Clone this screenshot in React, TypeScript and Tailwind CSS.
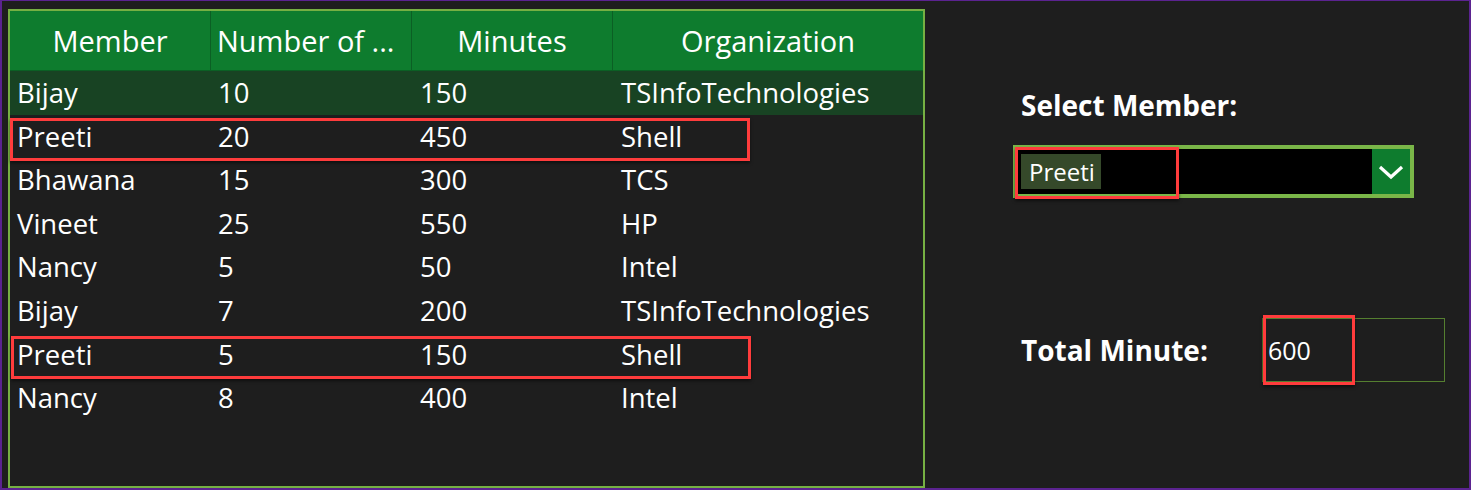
import React from "react";

const rows = [
  ["Bijay", "10", "150", "TSInfoTechnologies"],
  ["Preeti", "20", "450", "Shell"],
  ["Bhawana", "15", "300", "TCS"],
  ["Vineet", "25", "550", "HP"],
  ["Nancy", "5", "50", "Intel"],
  ["Bijay", "7", "200", "TSInfoTechnologies"],
  ["Preeti", "5", "150", "Shell"],
  ["Nancy", "8", "400", "Intel"],
];

const font = { fontFamily: '"Open Sans", "Noto Sans", sans-serif' };

export default function App() {
  return (
    <div
      className="relative w-[1471px] h-[490px] bg-[#1e1e1e] border-t border-x-2 border-b-2 border-[#5b2390] overflow-hidden text-white"
      style={font}
    >
      <div className="flex pl-[6px] pt-[8px]">
        {/* Table */}
        <div className="w-[917px] h-[479px] border-2 border-[#76b043] bg-[#1e1e1e] flex flex-col">
          <div className="h-[60px] bg-[#0e7c2e] grid grid-cols-[201px_201px_201px_1fr] border-b border-[#0b5f24] shrink-0 leading-none">
            <div className="flex items-center justify-center text-[29px] border-r border-[#0b5f24]">Member</div>
            <div className="flex items-center pl-[6px] text-[29px] border-r border-[#0b5f24] whitespace-nowrap overflow-hidden">Number of ...</div>
            <div className="flex items-center justify-center text-[29px] border-r border-[#0b5f24]">Minutes</div>
            <div className="flex items-center justify-center text-[29px]">Organization</div>
          </div>
          {rows.map((r, i) => (
            <div
              key={i}
              className={`h-[43.6px] grid grid-cols-[201px_201px_201px_1fr] items-center text-[27.5px] leading-none ${i === 0 ? "bg-[#184323]" : ""}`}
            >
              <div className="pl-[7px]">{r[0]}</div>
              <div className="pl-[7px]">{r[1]}</div>
              <div className="pl-[8px]">{r[2]}</div>
              <div className="pl-[8px]">{r[3]}</div>
            </div>
          ))}
        </div>

        {/* Right panel */}
        <div className="ml-[88px] flex flex-col">
          <div className="mt-[80px] pl-[8px] text-[28px] font-bold leading-[32px]">Select Member:</div>
          <div className="mt-[24px] w-[401px] h-[53px] border-4 border-[#7ab648] bg-black flex items-stretch">
            <div className="flex-1 flex items-center pl-[4px]">
              <div className="h-[35px] w-[80px] pl-[8px] bg-[#35492a] flex items-center text-[24px] leading-none">Preeti</div>
            </div>
            <div className="w-[38px] bg-[#0e7c2e] flex items-center justify-center">
              <svg width="26" height="16" viewBox="0 0 26 16">
                <polyline points="2,3 13,13 24,3" fill="none" stroke="white" strokeWidth="3.2" />
              </svg>
            </div>
          </div>
          <div className="mt-[120px] flex items-center">
            <div className="pl-[8px] w-[249px] text-[28px] font-bold leading-[32px]">Total Minute:</div>
            <div className="w-[183px] h-[64px] border border-[#557f30] flex items-center pl-[5px] text-[25px] leading-none">600</div>
          </div>
        </div>
      </div>

      {/* Annotation highlight boxes */}
      <div className="absolute left-[8px] top-[117px] w-[740px] h-[43px] border-[3px] border-[#ff3c3c] shadow-[0_2px_3px_rgba(0,0,0,0.5)]" />
      <div className="absolute left-[9px] top-[335px] w-[740px] h-[43px] border-[3px] border-[#ff3c3c] shadow-[0_2px_3px_rgba(0,0,0,0.5)]" />
      <div className="absolute left-[1013px] top-[146px] w-[164px] h-[52px] border-[3px] border-[#ff3c3c] shadow-[0_2px_3px_rgba(0,0,0,0.5)]" />
      <div className="absolute left-[1261px] top-[314px] w-[92px] h-[70px] border-[3px] border-[#ff3c3c] shadow-[0_2px_3px_rgba(0,0,0,0.5)]" />
    </div>
  );
}
